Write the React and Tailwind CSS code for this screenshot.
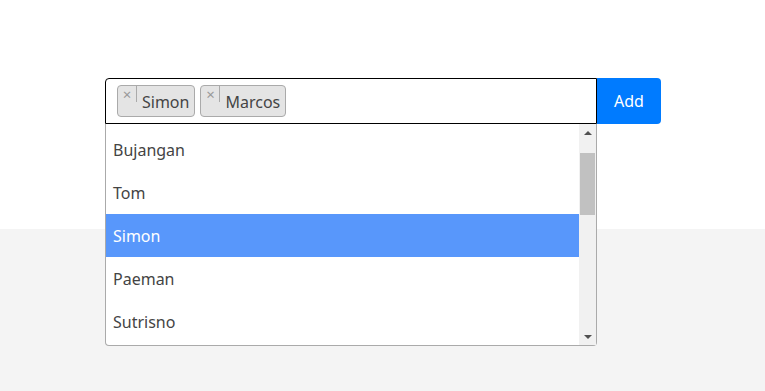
const tags = ['Simon', 'Marcos']
const options = ['Bujangan', 'Tom', 'Simon', 'Paeman', 'Sutrisno']

function Tag({ label }) {
  return (
    <span className="relative inline-flex h-[32px] items-end rounded-[4px] border border-[#aaa] bg-[#e4e4e4] pb-[4px] pl-[24px] pr-[5px] text-[16px] leading-[20px] text-[#444]">
      <span className="absolute left-0 top-0 flex h-[16px] w-[19px] items-center justify-center border-r border-[#aaa] text-[15px] leading-none text-[#999]">
        ×
      </span>
      {label}
    </span>
  )
}

function ScrollBar() {
  return (
    <div className="flex w-[17px] shrink-0 flex-col bg-[#f1f1f1]">
      <div className="flex h-[17px] items-center justify-center">
        <div className="h-0 w-0 border-x-[4px] border-b-[4px] border-x-transparent border-b-[#505050]" />
      </div>
      <div className="mx-[1px] mt-[12px] h-[62px] bg-[#c1c1c1]" />
      <div className="flex-1" />
      <div className="flex h-[17px] items-center justify-center">
        <div className="h-0 w-0 border-x-[4px] border-t-[4px] border-x-transparent border-t-[#505050]" />
      </div>
    </div>
  )
}

export default function App() {
  return (
    <div className="flex h-[391px] flex-col font-['Segoe_UI','Noto_Sans',sans-serif]">
      <div className="h-[229px] bg-white pl-[105px] pt-[78px]">
        <div className="relative flex w-[556px]">
          <div className="flex h-[46px] flex-1 items-center gap-[5px] rounded-tl-[4px] border border-black bg-white pl-[11px]">
            {tags.map((t) => (
              <Tag key={t} label={t} />
            ))}
          </div>
          <button className="h-[46px] w-[64px] rounded-r-[4px] bg-[#007bff] text-[16px] text-white">
            Add
          </button>

          <div className="absolute left-0 top-full z-10 flex h-[222px] w-[492px] rounded-b-[4px] border border-t-0 border-[#aaa] bg-white">
            <ul className="flex-1 pt-[4px]">
              {options.map((o) => (
                <li
                  key={o}
                  className={
                    'flex h-[43px] items-center pl-[7px] text-[16px] ' +
                    (o === 'Simon' ? 'bg-[#5897fb] text-white' : 'text-[#444]')
                  }
                >
                  {o}
                </li>
              ))}
            </ul>
            <ScrollBar />
          </div>
        </div>
      </div>
      <div className="flex-1 bg-[#f4f4f4]" />
    </div>
  )
}
